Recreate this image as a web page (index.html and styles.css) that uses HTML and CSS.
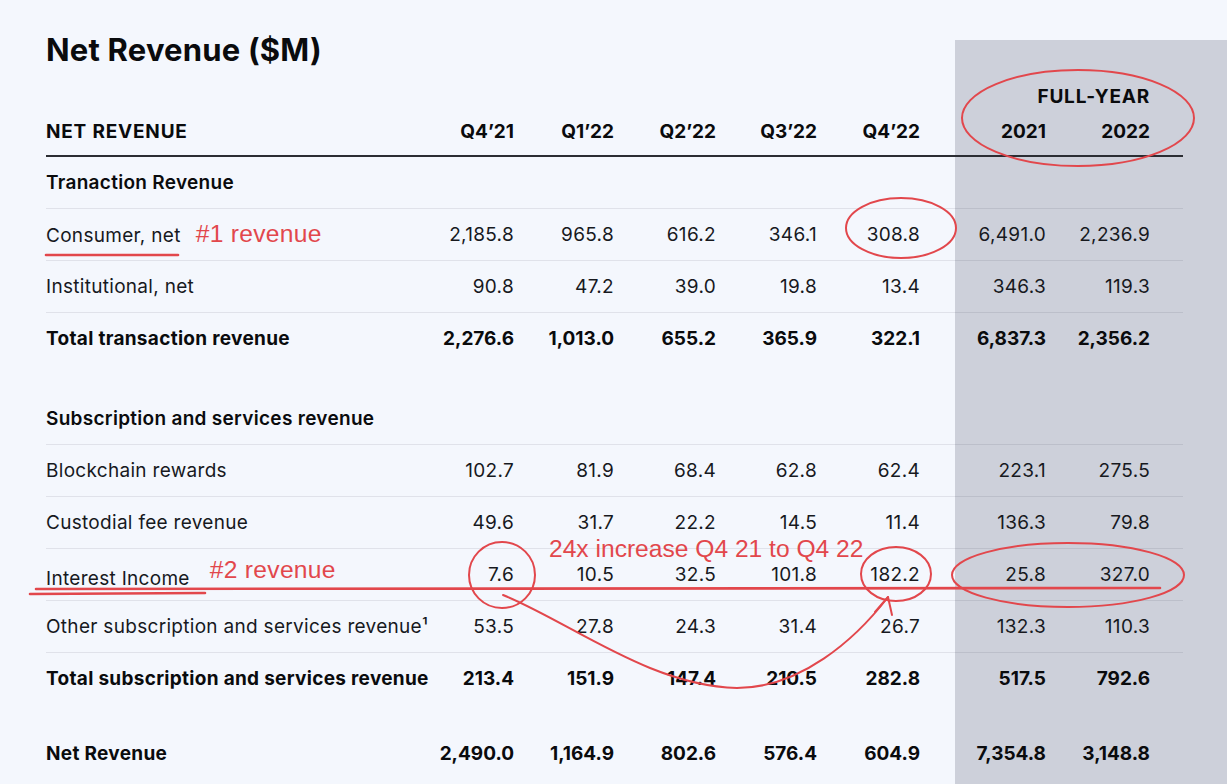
FILE: index.html
```html
<!DOCTYPE html>
<html lang="en">
<head>
<meta charset="utf-8">
<title>Net Revenue ($M)</title>
<link rel="stylesheet" href="styles.css">
</head>
<body>
<div class="page">
  <h1 class="title">Net Revenue ($M)</h1>

  <div class="thead">
    <div class="fy caps">FULL-YEAR</div>
    <div class="row head">
      <div class="label caps">NET REVENUE</div>
      <div>Q4’21</div><div>Q1’22</div><div>Q2’22</div><div>Q3’22</div><div>Q4’22</div>
      <div>2021</div><div>2022</div>
    </div>
  </div>

  <div class="row section line"><div class="label">Tranaction Revenue</div></div>
  <div class="row line">
    <div class="label">Consumer, net<span class="note note1">#1 revenue</span></div>
    <div>2,185.8</div><div>965.8</div><div>616.2</div><div>346.1</div><div>308.8</div><div>6,491.0</div><div>2,236.9</div>
  </div>
  <div class="row line">
    <div class="label">Institutional, net</div>
    <div>90.8</div><div>47.2</div><div>39.0</div><div>19.8</div><div>13.4</div><div>346.3</div><div>119.3</div>
  </div>
  <div class="row total">
    <div class="label">Total transaction revenue</div>
    <div>2,276.6</div><div>1,013.0</div><div>655.2</div><div>365.9</div><div>322.1</div><div>6,837.3</div><div>2,356.2</div>
  </div>

  <div class="gap-a"></div>

  <div class="row section line"><div class="label">Subscription and services revenue</div></div>
  <div class="row line">
    <div class="label">Blockchain rewards</div>
    <div>102.7</div><div>81.9</div><div>68.4</div><div>62.8</div><div>62.4</div><div>223.1</div><div>275.5</div>
  </div>
  <div class="row line">
    <div class="label">Custodial fee revenue</div>
    <div>49.6</div><div>31.7</div><div>22.2</div><div>14.5</div><div>11.4</div><div>136.3</div><div>79.8</div>
  </div>
  <div class="row line">
    <div class="label">Interest Income<span class="note note2">#2 revenue</span></div>
    <div>7.6</div><div>10.5</div><div>32.5</div><div>101.8</div><div>182.2</div><div>25.8</div><div>327.0</div>
  </div>
  <div class="row line">
    <div class="label">Other subscription and services revenue¹</div>
    <div>53.5</div><div>27.8</div><div>24.3</div><div>31.4</div><div>26.7</div><div>132.3</div><div>110.3</div>
  </div>
  <div class="row total">
    <div class="label">Total subscription and services revenue</div>
    <div>213.4</div><div>151.9</div><div>147.4</div><div>210.5</div><div>282.8</div><div>517.5</div><div>792.6</div>
  </div>

  <div class="gap-b"></div>

  <div class="row total">
    <div class="label">Net Revenue</div>
    <div>2,490.0</div><div>1,164.9</div><div>802.6</div><div>576.4</div><div>604.9</div><div>7,354.8</div><div>3,148.8</div>
  </div>

  <svg class="marks" width="1227" height="784" viewBox="0 0 1227 784" aria-hidden="true">
    <g fill="none" stroke="#e2474c" stroke-width="2" stroke-linecap="round" stroke-linejoin="round">
      <ellipse cx="1078" cy="118" rx="116" ry="48"/>
      <ellipse cx="901" cy="228" rx="55" ry="30"/>
      <ellipse cx="502" cy="575" rx="33" ry="33"/>
      <ellipse cx="896" cy="574" rx="35" ry="27"/>
      <ellipse cx="1068" cy="575" rx="116" ry="32"/>
      <path d="M503 595 C570 622 650 686 737 688 C800 688 855 640 888 597" />
      <path d="M875 612 L888 597 L892 615" />
    </g>
    <g fill="none" stroke="#e2474c" stroke-width="2.6" stroke-linecap="round">
      <line x1="46" y1="255" x2="178" y2="255"/>
      <line x1="36" y1="589" x2="1160" y2="588"/>
      <line x1="30" y1="594" x2="205" y2="593"/>
    </g>
    <text class="note-svg" x="549" y="557">24x increase Q4 21 to Q4 22</text>
  </svg>
</div>
</body>
</html>
```

FILE: styles.css
```css
* { box-sizing: border-box; }

html, body {
  margin: 0;
  padding: 0;
  background: #f4f7fd;
}

body {
  font-family: "Inter", "Liberation Sans", sans-serif;
  color: #17191e;
}

.page {
  position: relative;
  width: 1227px;
  height: 784px;
  overflow: hidden;
  padding: 30px 44px 0 46px;
  background-color: #f4f7fd;
  background-image: linear-gradient(#cdd0da, #cdd0da);
  background-repeat: no-repeat;
  background-position: 955px 40px;
  background-size: 272px 744px;
}

.title {
  margin: 0;
  font-size: 31px;
  line-height: 40px;
  font-weight: 700;
  color: #0a0b0d;
  letter-spacing: 0.2px;
}

.thead {
  margin-top: 15px;
  border-bottom: 2px solid #2b2d33;
  padding-bottom: 11px;
}

.fy {
  font-size: 19px;
  line-height: 24px;
  font-weight: 700;
  color: #0a0b0d;
  text-align: right;
  padding-right: 33px;
  margin-bottom: 11px;
}

.row {
  display: grid;
  grid-template-columns: 368px 100px 100px 102px 101px 103px 126px 104px 33px;
  align-items: center;
  height: 52px;
  font-size: 19px;
  line-height: 24px;
  letter-spacing: 0.3px;
}

.row > div { text-align: right; white-space: nowrap; }
.row > .label { text-align: left; }

.row.line { border-bottom: 1px solid rgba(20, 24, 40, 0.09); }

.row.head {
  height: 24px;
  font-weight: 700;
  color: #0a0b0d;
  letter-spacing: 0;
}

.caps { letter-spacing: 0.8px; }
.row.head > .caps { letter-spacing: 0.8px; }

.row.section {
  font-weight: 600;
  color: #0a0b0d;
}

.row.total {
  font-weight: 700;
  color: #0a0b0d;
}

.row.total > div:not(.label) { letter-spacing: 0; }

.gap-a { height: 28px; }
.gap-b { height: 23px; }

.note {
  font-family: "Liberation Sans", Arial, sans-serif;
  font-size: 24.6px;
  letter-spacing: 0.3px;
  color: #e2474c;
  font-weight: 400;
}

.note1 { margin-left: 15px; }
.note2 { margin-left: 20px; vertical-align: 7px; }

.marks {
  position: absolute;
  left: 0;
  top: 0;
  pointer-events: none;
}

.note-svg {
  font-family: "Liberation Sans", Arial, sans-serif;
  font-size: 24.6px;
  fill: #e2474c;
}
```
